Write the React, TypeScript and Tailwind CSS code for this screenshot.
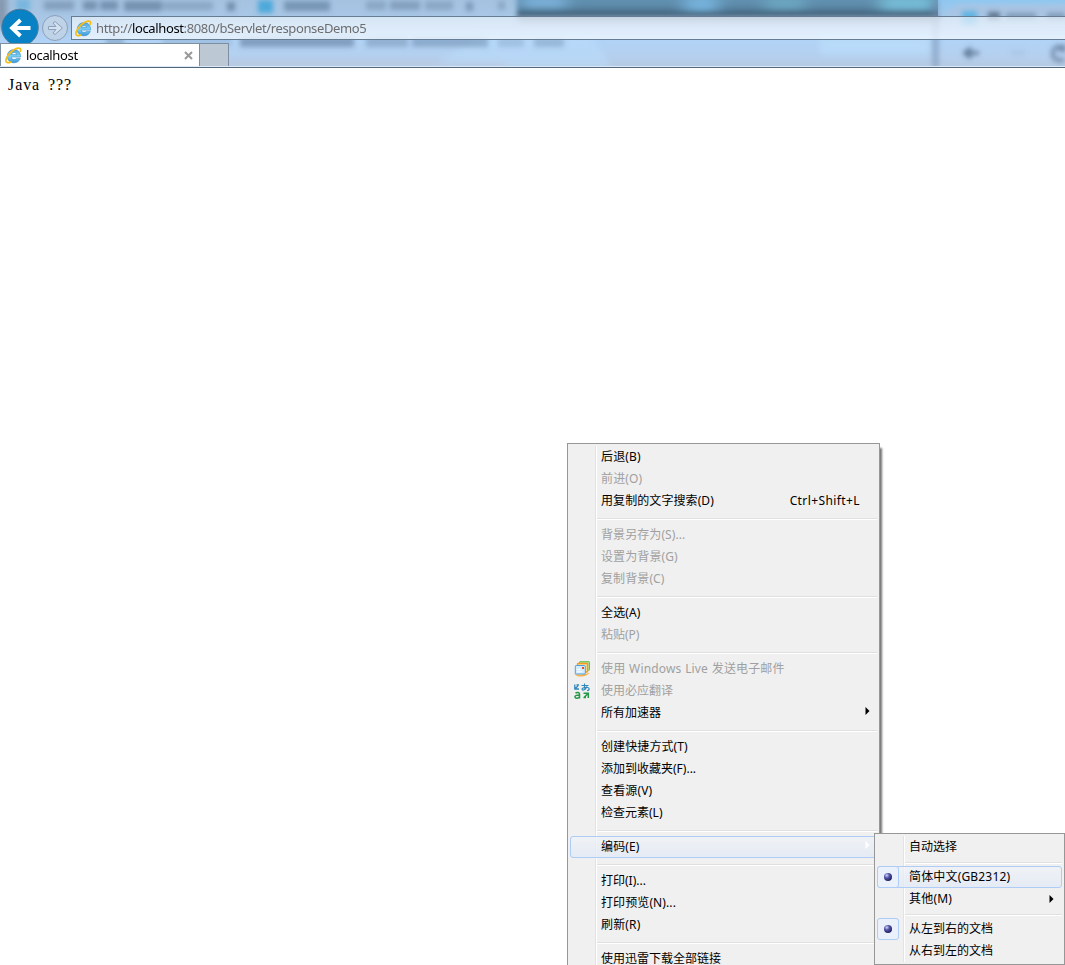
import React from "react";

type MenuEntry = {
  label?: string;
  shortcut?: string;
  disabled?: boolean;
  icon?: React.ReactNode;
  arrow?: boolean;
  active?: boolean;
  radio?: boolean;
  fit?: string;
  sep?: boolean;
};

function IEIcon() {
  return (
    <svg width="17" height="17" viewBox="0 0 17 17" className="shrink-0">
      <defs>
        <linearGradient id="ie" x1="0" y1="0" x2="0" y2="1">
          <stop offset="0" stopColor="#4aa5dc" />
          <stop offset="0.5" stopColor="#7bd2f8" />
          <stop offset="1" stopColor="#3a97d6" />
        </linearGradient>
      </defs>
      <path
        d="M15.600 10.100H6.400c.1 1.500 1.100 2.400 2.600 2.400 1 0 1.800-.4 2.300-1.100h4c-.9 2.700-3.300 4.400-6.300 4.400-4 0-6.700-2.600-6.700-6.500 0-3.900 2.700-6.700 6.700-6.700 4.200 0 6.800 2.900 6.600 7.500zM6.500 7.600h5.100c-.1-1.200-1.100-2.100-2.500-2.100-1.400 0-2.400.8-2.600 2.100z"
        fill="url(#ie)"
        stroke="#2d81bd"
        strokeWidth="0.500"
      />
      <path
        d="M15.300 4.300c.7-1.900.2-3-1.200-3.100C12.300 1 9.300 2.200 6.600 4.500 3.100 7.500.4 12 1 14.400c.4 1.600 2.300 1.700 4.900.5"
        fill="none"
        stroke="#f6bd16"
        strokeWidth="1.700"
        strokeLinecap="round"
      />
    </svg>
  );
}

function MailIcon() {
  return (
    <svg width="16" height="16" viewBox="0 0 16 16" className="shrink-0">
      <rect x="5.500" y="0.700" width="10" height="8.500" rx=".5" fill="#b5df95" stroke="#62bd4e" />
      <rect x="3.500" y="2.500" width="10" height="8.500" rx=".5" fill="#ffdf9a" stroke="#f59a20" strokeWidth="1.300" />
      <path d="M0 12.700c3 1.300 10 1.500 15.800-1.100-3 4.700-12.300 5.500-15.800 1.100z" fill="#fbb040" />
      <rect x="1.300" y="4.500" width="10" height="8.500" rx=".8" fill="#d3ebfc" stroke="#4f9fdf" />
      <path d="M3 8.500h3.500M3 10.800h5" stroke="#fff" />
      <rect x="8" y="6" width="2" height="2" fill="#e0531f" />
    </svg>
  );
}

function TranslateIcon() {
  return (
    <svg width="16" height="16" viewBox="0 0 16 16" fill="none" className="shrink-0">
      <path d="M.8 1.500v4.500H5M1 5.800l3-2.800M2.500 2h2.500" stroke="#3388bb" strokeWidth="1.300" />
      <path
        d="M7.500 2.500h7M10.500.5c-.3 2.500 0 5 .8 6.500M13 3.500C12.300 5.500 10 7.500 8.500 7 7 6.200 9.500 4.200 12 4.200c4 0 4 3 1 3.500"
        stroke="#3388bb"
        strokeWidth="1.100"
      />
      <path d="M1.500 10c1.500-.9 4-.7 4 1V15.500M5.500 12C3 12 1 12.300 1 13.800c0 2 3.500 1.900 4.500 0" stroke="#229944" strokeWidth="1.500" />
      <path d="M9.500 10.200H14.300v4.800M14 10.500l-3.500 3.500M9.500 14.500h2.500" stroke="#229944" strokeWidth="1.500" />
    </svg>
  );
}

function RadioDot() {
  return (
    <svg width="8" height="8" viewBox="0 0 8 8">
      <defs>
        <radialGradient id="dot" cx=".35" cy=".3" r=".7">
          <stop offset="0" stopColor="#d3d5ff" />
          <stop offset=".45" stopColor="#5557a8" />
          <stop offset="1" stopColor="#20205f" />
        </radialGradient>
      </defs>
      <circle cx="4" cy="4" r="4" fill="url(#dot)" />
    </svg>
  );
}

function Separator({ small }: { small?: boolean }) {
  return (
    <div className={small ? "flex h-2 items-center pl-[28px]" : "flex h-3 items-center pl-[27px]"}>
      <div className="mt-px h-[2px] flex-1 border-b border-white bg-[#e0e0e0]" />
    </div>
  );
}

function MenuRow({ item, sub }: { item: MenuEntry; sub?: boolean }) {
  const base = "relative flex h-[22px] items-center rounded-[3px] border pr-[3px]";
  const look = item.active
    ? " border-[#aeccf5] bg-linear-to-b from-[#eff2f7]/70 to-[#e2eaf6]/80"
    : " border-transparent";
  return (
    <div className={base + look}>
      <div
        className={
          item.radio
            ? "-ml-px flex h-[22px] w-[22px] shrink-0 items-center justify-center rounded-[3px] border border-[#aeccf5] bg-[#eaf1fb]"
            : "-ml-px flex w-[22px] shrink-0 justify-center pl-[2px]"
        }
      >
        {item.radio ? <RadioDot /> : item.icon}
      </div>
      <span
        className={
          (sub ? "ml-[10px]" : "ml-[9px]") +
          " whitespace-pre " +
          (item.fit ?? "") +
          (item.disabled ? " text-[#a0a0a0]" : " text-black")
        }
      >
        {item.label}
      </span>
      {item.shortcut && <span className="mr-[13px] ml-auto tracking-[0.4px]">{item.shortcut}</span>}
      {item.arrow && (
        <svg
          width="5"
          height="8"
          viewBox="0 0 5 8"
          className={sub ? "mr-[4px] ml-auto" : "mr-[3px] mb-[4px] ml-auto"}
        >
          <path d="M0.500 0L4.500 4L0.500 8z" fill={item.active ? "#fff" : "#000"} />
        </svg>
      )}
    </div>
  );
}

const mainMenu: MenuEntry[] = [
  { label: "后退(B)", fit: "tracking-[0.15px]" },
  { label: "前进(O)", disabled: true, fit: "tracking-[0.15px]" },
  { label: "用复制的文字搜索(D)", shortcut: "Ctrl+Shift+L", fit: "tracking-[0.08px]" },
  { sep: true },
  { label: "背景另存为(S)...", disabled: true, fit: "tracking-[0.08px]" },
  { label: "设置为背景(G)", disabled: true, fit: "tracking-[0.1px]" },
  { label: "复制背景(C)", disabled: true, fit: "tracking-[0.1px]" },
  { sep: true },
  { label: "全选(A)", fit: "tracking-[0.15px]" },
  { label: "粘贴(P)", disabled: true },
  { sep: true },
  {
    label: "使用 Windows Live 发送电子邮件",
    disabled: true,
    icon: <MailIcon />,
    fit: "tracking-[0.15px] [word-spacing:0.5px]",
  },
  { label: "使用必应翻译", disabled: true, icon: <TranslateIcon /> },
  { label: "所有加速器", arrow: true },
  { sep: true },
  { label: "创建快捷方式(T)", fit: "tracking-[0.1px]" },
  { label: "添加到收藏夹(F)..." },
  { label: "查看源(V)", fit: "tracking-[0.15px]" },
  { label: "检查元素(L)" },
  { sep: true },
  { label: "编码(E)", arrow: true, active: true, fit: "tracking-[0.15px]" },
  { sep: true },
  { label: "打印(I)..." },
  { label: "打印预览(N)...", fit: "tracking-[0.1px]" },
  { label: "刷新(R)", fit: "tracking-[0.15px]" },
  { sep: true },
  { label: "使用迅雷下载全部链接" },
];

const subMenu: MenuEntry[] = [
  { label: "自动选择" },
  { sep: true },
  { label: "简体中文(GB2312)", active: true, radio: true, fit: "tracking-[0.17px]" },
  { label: "其他(M)", arrow: true, fit: "tracking-[0.2px]" },
  { sep: true },
  { label: "从左到右的文档", radio: true },
  { label: "从右到左的文档" },
];

function Glass() {
  return (
    <svg className="absolute inset-0" width="1065" height="68" viewBox="0 0 1065 68">
      <defs>
        <filter id="b6" x="-50%" y="-200%" width="200%" height="500%"><feGaussianBlur stdDeviation="8 3" /></filter>
        <filter id="b3" x="-20%" y="-100%" width="140%" height="300%"><feGaussianBlur stdDeviation="3" /></filter>
        <filter id="b2" x="-20%" y="-100%" width="140%" height="300%"><feGaussianBlur stdDeviation="2.600" /></filter>
        <linearGradient id="base" x1="0" y1="0" x2="0" y2="1">
          <stop offset="0" stopColor="#a5c3e1" />
          <stop offset=".3" stopColor="#a9c7e6" />
          <stop offset=".6" stopColor="#b1d3f6" />
          <stop offset=".82" stopColor="#b5d0ef" />
          <stop offset="1" stopColor="#b5cae2" />
        </linearGradient>
        <linearGradient id="teal" x1="0" y1="0" x2="0" y2="1">
          <stop offset="0" stopColor="#6495b3" />
          <stop offset=".5" stopColor="#5e8cab" />
          <stop offset=".75" stopColor="#4e7490" />
          <stop offset="1" stopColor="#2d455b" />
        </linearGradient>
        <linearGradient id="right" x1="0" y1="0" x2="0" y2="1">
          <stop offset="0" stopColor="#8fc7f0" />
          <stop offset="1" stopColor="#a5c8ea" />
        </linearGradient>
      </defs>
      <rect width="1065" height="68" fill="url(#base)" />
      <g filter="url(#b3)">
        <rect x="-5" y="-5" width="12" height="32" fill="#8497ae" />
        <path d="M480 36h112l20 32H430z" fill="#b9dcfb" opacity=".55" />
        <rect x="820" y="36" width="110" height="18" fill="#badcfa" opacity=".8" />
        <path d="M0 63h505v10H0z" fill="#b9cbe4" />
      </g>
      <g filter="url(#b2)" fill="#5f7c9b">
        <rect x="44" y="1" width="30" height="9" opacity=".5" />
        <rect x="83" y="1" width="14" height="9" opacity=".7" />
        <rect x="100" y="1" width="18" height="9" opacity=".7" />
        <rect x="124" y="1" width="38" height="10" opacity=".7" />
        <rect x="163" y="2" width="50" height="8" opacity=".4" />
        <rect x="227" y="2" width="8" height="9" opacity=".75" />
        <rect x="284" y="1" width="46" height="10" opacity=".65" />
        <rect x="366" y="1" width="20" height="9" opacity=".4" />
        <rect x="390" y="1" width="30" height="9" opacity=".5" />
        <rect x="425" y="1" width="28" height="9" opacity=".4" />
        <rect x="466" y="2" width="7" height="9" opacity=".6" />
        <rect x="498" y="1" width="7" height="9" opacity=".4" />
        <rect x="106" y="37" width="18" height="10" opacity=".35" />
        <rect x="162" y="37" width="70" height="9" opacity=".2" />
        <rect x="240" y="37" width="114" height="10" opacity=".6" />
        <rect x="366" y="37" width="42" height="10" opacity=".4" />
        <rect x="412" y="37" width="76" height="10" opacity=".45" />
        <rect x="498" y="38" width="26" height="9" opacity=".25" />
        <rect x="534" y="38" width="30" height="9" opacity=".35" />
        <rect x="16" y="-1" width="14" height="12" fill="#58aedb" opacity=".6" />
        <rect x="258" y="0" width="15" height="13" fill="#4ea9da" />
      </g>
      <path d="M517 -6H941V17H517z" fill="url(#teal)" filter="url(#b2)" />
      <g filter="url(#b6)">
        <rect x="522" y="-4" width="44" height="12" fill="#79aed6" />
        <rect x="684" y="-4" width="34" height="15" fill="#74b0da" />
        <rect x="765" y="-4" width="40" height="13" fill="#6ba4bf" />
        <rect x="880" y="-4" width="54" height="14" fill="#74bad4" />
      </g>
      <rect x="938" width="127" height="16" fill="url(#right)" />
      <path d="M958 5h112v12H945z" fill="#a9c4e3" filter="url(#b2)" />
      <path d="M519 17H938v5H519z" fill="#73879a" opacity=".8" filter="url(#b3)" />
      <g filter="url(#b2)">
        <rect x="932" y="0" width="7" height="68" fill="#6f8faf" opacity=".5" />
        <rect x="962" y="11" width="15" height="14" fill="#61b4e2" />
        <rect x="988" y="12" width="12" height="8" fill="#60768f" />
        <rect x="1006" y="13" width="30" height="6" fill="#7f99b5" />
        <rect x="1047" y="13" width="18" height="6" fill="#7f99b5" />
        <path d="M979 53h-14m6-5l-6 5 6 5" stroke="#5e7998" strokeWidth="3.500" fill="none" />
        <rect x="1011" y="51" width="14" height="4" fill="#9cb9da" opacity=".5" />
        <path d="M1064 48a7 7 0 1 0 0 11M1064 45v5h-5" stroke="#6d86a5" strokeWidth="3.500" fill="none" />
      </g>
    </svg>
  );
}

function AddressBar() {
  return (
    <div className="flex h-6 flex-1 items-center border-y border-l border-[#657c92] bg-linear-to-b from-[#e9f2fb]/70 to-[#eff7ff]/80 pl-[3px]">
      <IEIcon />
      <span className="ml-[4px] text-[13px] leading-5 tracking-[-0.37px] whitespace-pre text-[#6d6d6d]">
        http://<span className="text-black">localhost</span>:8080/bServlet/responseDemo5
      </span>
    </div>
  );
}

function Header() {
  return (
    <header className="relative h-[68px] overflow-hidden border-b border-[#53677b]">
      <Glass />
      <div className="relative flex h-[43px] items-start overflow-hidden">
        <svg width="71" height="43" viewBox="0 0 71 43" fill="none" className="shrink-0">
          <circle cx="20" cy="27.500" r="18.300" fill="#0882c5" stroke="#557994" />
          <path d="M30.500 28H12m8.500-8l-8.500 8 8.500 8" stroke="#fff" strokeWidth="3.800" />
          <circle cx="55" cy="28" r="12.500" fill="#bfd3e8" stroke="#8b9fb7" />
          <path
            d="M48.500 26.500h7.500l-3-3.500 2-1.500 7.500 6.500-7.500 6.500-2-1.500 3-3.500h-7.500z"
            fill="#d3e1f0"
            stroke="#8b9fb7"
            strokeLinejoin="round"
          />
        </svg>
        <div className="flex flex-1 pt-4">
          <AddressBar />
        </div>
      </div>
      <div className="relative flex h-6 items-start border-b border-[#dce8f5]">
        <div className="flex h-[23px] w-[200px] items-center border border-b-0 border-[#7c8fa3] bg-white pr-[5px] pl-[4px]">
          <IEIcon />
          <span className="ml-[4px] text-[13px] leading-5 tracking-[-0.35px] text-black">localhost</span>
          <svg width="9" height="9" viewBox="0 0 9 9" className="mr-px ml-auto">
            <path d="M1 1l7 7M8 1L1 8" stroke="#999" strokeWidth="2" />
          </svg>
        </div>
        <div className="h-[23px] w-[29px] border-t border-r border-[#7c8fa3] bg-[#bdc8d5]" />
      </div>
    </header>
  );
}

export default function App() {
  return (
    <div className="relative h-[965px] w-[1065px] overflow-hidden bg-white font-['Noto_Sans','Noto_Sans_CJK_SC',sans-serif] text-[12px] leading-5 text-black">
      <Header />
      <main className="px-2 pt-[7px] font-['Liberation_Serif',serif] text-[16px] leading-5 tracking-[0.9px] [word-spacing:3px]">
        Java ???
      </main>

      <div className="absolute top-[443px] left-[567px] h-[540px] w-[313px] border border-[#979797] bg-[#f0f0f0] px-[2px] pt-[2px] shadow-[3px_4px_2px_-1px_rgba(0,0,0,0.55)]">
        <div className="absolute top-[2px] bottom-0 left-[27px] w-[2px] border-r border-white bg-[#e2e3e3]" />
        {mainMenu.map((item, i) => (item.sep ? <Separator key={i} /> : <MenuRow key={i} item={item} />))}
      </div>

      <div className="absolute top-[833px] left-[874px] h-[132px] w-[191px] border border-[#979797] bg-[#f0f0f0] px-[2px] pt-[2px]">
        <div className="absolute top-[2px] bottom-[2px] left-[28px] w-[2px] border-r border-white bg-[#e2e3e3]" />
        {subMenu.map((item, i) => (item.sep ? <Separator key={i} small /> : <MenuRow key={i} item={item} sub />))}
      </div>
    </div>
  );
}
